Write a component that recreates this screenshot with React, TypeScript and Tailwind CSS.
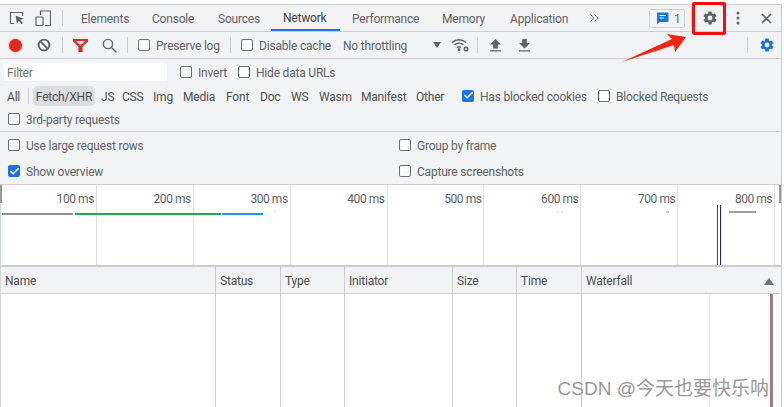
import { Check } from "lucide-react";

const UI_FONT = "font-['Roboto','Liberation_Sans',sans-serif] tracking-[-0.2px]";

const tabs = [
  { label: "Elements", width: "w-[71px]" },
  { label: "Console", width: "w-[66px]" },
  { label: "Sources", width: "w-[65px]" },
  { label: "Network", width: "w-[69px]", active: true },
  { label: "Performance", width: "w-[90px]" },
  { label: "Memory", width: "w-[68px]" },
  { label: "Application", width: "w-[81px]" },
];

const filterTypes = [
  { label: "JS", width: "w-[21px]" },
  { label: "CSS", width: "w-[31px]" },
  { label: "Img", width: "w-[30px]" },
  { label: "Media", width: "w-[43px]" },
  { label: "Font", width: "w-[34px]" },
  { label: "Doc", width: "w-[31px]" },
  { label: "WS", width: "w-[28px]" },
  { label: "Wasm", width: "w-[42px]" },
  { label: "Manifest", width: "w-[55px]" },
  { label: "Other", width: "w-[46px]" },
];

const ticks = ["100 ms", "200 ms", "300 ms", "400 ms", "500 ms", "600 ms", "700 ms", "800 ms"];

const columns = [
  { label: "Name", width: "w-[215px]" },
  { label: "Status", width: "w-[65px]" },
  { label: "Type", width: "w-[64px]" },
  { label: "Initiator", width: "w-[108px]" },
  { label: "Size", width: "w-[64px]" },
  { label: "Time", width: "w-[65px]" },
];

function Box({ checked }: { checked?: boolean }) {
  if (checked) {
    return (
      <span className="flex h-[12px] w-[12px] shrink-0 items-center justify-center rounded-[2px] bg-[#1a73e8]">
        <Check size={11} strokeWidth={3.5} color="#fff" />
      </span>
    );
  }
  return <span className="h-[12px] w-[12px] shrink-0 rounded-[2px] border border-[#6b6e72] bg-white" />;
}

function Option({ label, checked, className }: { label: string; checked?: boolean; className?: string }) {
  return (
    <div className={`flex items-center gap-[6px] whitespace-nowrap ${className ?? ""}`}>
      <Box checked={checked} />
      <span className="pt-[2px]">{label}</span>
    </div>
  );
}

function Sep({ className }: { className?: string }) {
  return <span className={`h-[16px] w-px shrink-0 bg-[#cacdd1] ${className ?? ""}`} />;
}

function Gear({ color, size = 16 }: { color: string; size?: number }) {
  return (
    <svg width={size} height={size} viewBox="0 0 24 24" fill={color}>
      <path
        fillRule="evenodd"
        d="M19.4 13a7.6 7.6 0 0 0 0-2l2.4-1.8-2.4-4.1-2.8 1.1a7.5 7.5 0 0 0-1.7-1L14.4 2.2H9.6l-.5 3a7.5 7.5 0 0 0-1.7 1L4.6 5.1 2.2 9.2 4.6 11a7.6 7.6 0 0 0 0 2l-2.4 1.8 2.4 4.1 2.8-1.1c.5.4 1.1.7 1.7 1l.5 3h4.8l.5-3c.6-.3 1.2-.6 1.7-1l2.8 1.1 2.4-4.1zM12 15.6a3.6 3.6 0 1 1 0-7.2 3.6 3.6 0 0 1 0 7.2z"
      />
    </svg>
  );
}

function TopBar() {
  return (
    <div className="flex h-[27px] shrink-0 items-center border-b border-[#cacdd1]">
      <svg className="ml-[9px] shrink-0" width="16" height="16" viewBox="0 0 16 16" fill="none">
        <path d="M5 13.5H1.5v-11h12V6" stroke="#5f6368" strokeWidth="1.2" />
        <path d="M6.5 5.5l8 3.2-3.2 1.2 2.6 3.2-1.5 1.2-2.5-3.2-2 2.4z" fill="#5f6368" />
      </svg>
      <svg className="ml-[10px] shrink-0" width="16" height="17" viewBox="0 0 16 17" fill="none" stroke="#5f6368" strokeWidth="1.2">
        <path d="M5.5 5V1h10v14.5H10" />
        <rect x="1" y="7" width="7" height="8.5" rx="0.5" />
      </svg>
      <Sep className="ml-[11px]" />
      <div className="ml-[6px] flex h-full text-[12px] text-[#5f6368]">
        {tabs.map((tab) => (
          <div
            key={tab.label}
            className={`flex items-center whitespace-nowrap pl-[12px] pt-[2px] ${tab.width} ${
              tab.active ? "border-b-2 border-[#1a73e8] text-[#3c4043]" : ""
            }`}
          >
            {tab.label}
          </div>
        ))}
        <div className="flex items-center pl-[11px]">
          <svg width="9" height="8" viewBox="0 0 9 8" fill="none" stroke="#6e7175" strokeWidth="1">
            <path d="M0.5 0.5L4 4L0.5 7.5M4.5 0.5L8 4L4.5 7.5" />
          </svg>
        </div>
      </div>
      <div className="ml-auto flex h-[19px] w-[36px] items-center gap-[5px] rounded-[2px] border border-[#d0d2d5] pl-[6px] text-[12px] text-[#5f6368]">
        <svg width="13" height="13" viewBox="0 0 13 13">
          <path d="M1 1.5A1 1 0 0 1 2 .5h9.5a1 1 0 0 1 1 1V9a1 1 0 0 1-1 1H3.5L1 12.5z" fill="#1a73e8" />
          <path d="M3.5 3.5h6.5M3.5 6h4.5" stroke="#fff" strokeWidth="1.2" />
        </svg>
        <span className="pt-[2px]">1</span>
      </div>
      <Sep className="ml-[6px]" />
      <div className="ml-[10px] flex w-[16px] justify-center">
        <Gear color="#5f6368" />
      </div>
      <svg className="ml-[18px]" width="4" height="14" viewBox="0 0 4 14" fill="#5f6368">
        <circle cx="2" cy="2" r="1.5" />
        <circle cx="2" cy="7" r="1.5" />
        <circle cx="2" cy="12" r="1.5" />
      </svg>
      <svg className="ml-[21px] mr-[9px]" width="11" height="11" viewBox="0 0 11 11" stroke="#5f6368" strokeWidth="1.6">
        <path d="M1 1l9 9M10 1l-9 9" />
      </svg>
    </div>
  );
}

function NetworkBar() {
  return (
    <div className="flex h-[27px] shrink-0 items-center border-b border-[#cacdd1] text-[12px] text-[#5f6368]">
      <span className="ml-[9px] h-[13px] w-[13px] shrink-0 rounded-full bg-[#dc2a20] shadow-[0_0_2px_#e8837c]" />
      <svg className="ml-[15px] shrink-0" width="14" height="14" viewBox="0 0 14 14" fill="none" stroke="#5f6368" strokeWidth="1.9">
        <circle cx="7" cy="7" r="5.4" />
        <path d="M3.2 3.2l7.6 7.6" />
      </svg>
      <Sep className="ml-[11px]" />
      <svg className="ml-[10px] shrink-0" width="15" height="13" viewBox="0 0 15 13">
        <path fillRule="evenodd" d="M0 0h15v2.4L9.6 7.5V13H5.4V7.5L0 2.4zM3 2l3.6 3.6h1.8L12 2z" fill="#d93025" />
      </svg>
      <svg className="ml-[14px] shrink-0" width="15" height="15" viewBox="0 0 15 15" fill="none" stroke="#5f6368" strokeWidth="1.4">
        <circle cx="6" cy="6" r="4.6" />
        <path d="M9.5 9.5l5 5" />
      </svg>
      <Sep className="ml-[10px]" />
      <Option label="Preserve log" className="ml-[10px] w-[92px]" />
      <Sep />
      <Option label="Disable cache" className="ml-[10px] w-[102px]" />
      <span className="w-[90px] whitespace-nowrap pt-[2px]">No throttling</span>
      <svg className="shrink-0" width="8" height="6" viewBox="0 0 8 6" fill="#5f6368">
        <path d="M0 0h8L4 6z" />
      </svg>
      <svg className="ml-[10px] shrink-0" width="18" height="14" viewBox="0 0 18 14" fill="none" stroke="#5f6368" strokeWidth="1.4">
        <path d="M1 4.5C5 .8 11 .8 15 4.5M3.5 7c2.6-2.3 6.4-2.3 9 0M6 9.5c1.3-1 2.7-1 4 0" />
        <circle cx="8" cy="11.6" r="0.8" fill="#5f6368" />
        <circle cx="15" cy="11" r="1.7" strokeWidth="1.6" />
      </svg>
      <Sep className="ml-[8px]" />
      <svg className="ml-[12px] shrink-0" width="11" height="13" viewBox="0 0 11 13" fill="#5f6368">
        <path d="M5.5 0L11 5.5H7.8V9.5H3.2V5.5H0zM0 11.3h11V12.6H0z" />
      </svg>
      <svg className="ml-[18px] shrink-0" width="11" height="13" viewBox="0 0 11 13" fill="#5f6368">
        <path d="M3.2 0h4.6v4H11L5.5 9.5 0 4h3.2zM0 11.3h11V12.6H0z" />
      </svg>
      <Sep className="ml-auto" />
      <div className="ml-[11px] mr-[6px]">
        <Gear color="#1a73e8" />
      </div>
    </div>
  );
}

function FilterPanel() {
  return (
    <div className="flex h-[73px] shrink-0 flex-col border-b border-[#cacdd1] text-[12px] text-[#5f6368]">
      <div className="flex h-[24px] shrink-0 items-center pt-[2px]">
        <div className="ml-[4px] flex h-[18px] w-[163px] items-center bg-white pl-[3px] pt-[2px] text-[#6e7175]">Filter</div>
        <Option label="Invert" className="ml-[13px] w-[58px]" />
        <Option label="Hide data URLs" />
      </div>
      <div className="flex h-[24px] shrink-0 items-center pt-[1px] text-[#4b4e52]">
        <span className="ml-[7px] w-[21px] pt-[2px]">All</span>
        <Sep />
        <span className="ml-[4px] mr-[6px] flex h-[20px] w-[62px] items-center justify-center rounded-[5px] bg-[#dadce0] pt-[2px]">Fetch/XHR</span>
        {filterTypes.map((type) => (
          <span key={type.label} className={`whitespace-nowrap pt-[2px] ${type.width}`}>
            {type.label}
          </span>
        ))}
        <Option label="Has blocked cookies" checked className="w-[136px] text-[#5f6368]" />
        <Option label="Blocked Requests" className="text-[#5f6368]" />
      </div>
      <div className="flex flex-1 items-center pl-[8px]">
        <Option label="3rd-party requests" />
      </div>
    </div>
  );
}

function SettingsPanel() {
  return (
    <div className="grid h-[53px] shrink-0 grid-cols-[399px_1fr] grid-rows-2 items-center border-b border-[#cacdd1] text-[12px] text-[#5f6368]">
      <Option label="Use large request rows" className="pl-[8px]" />
      <Option label="Group by frame" />
      <Option label="Show overview" checked className="pl-[8px]" />
      <Option label="Capture screenshots" />
    </div>
  );
}

function Overview() {
  return (
    <div className="relative flex h-[82px] shrink-0 border-b-[2px] border-[#cacdd1] bg-white text-[12px] tracking-[-0.45px] text-[#5f6368]">
      {ticks.map((tick) => (
        <div key={tick} className="h-full w-[96.9px] shrink-0 border-r border-[#e0e0e0] pr-[2px] pt-[5px] text-right">
          {tick}
        </div>
      ))}
      {/* timeline marks sit on top of the grid */}
      <svg className="absolute left-0 top-0" width="781" height="80" viewBox="0 0 781 80">
        <rect x="0" y="0" width="1" height="80" fill="#c8d4e8" />
        <rect x="0" y="0" width="2" height="18" fill="#9a9a9a" />
        <rect x="779" y="0" width="2" height="18" fill="#9a9a9a" />
        <rect x="2" y="28" width="71" height="2" fill="#8f8f8f" />
        <rect x="75" y="28" width="146" height="2" fill="#12b050" />
        <rect x="222" y="28" width="41" height="2" fill="#1a9be8" />
        <rect x="729" y="26" width="27" height="2" fill="#a0a0a0" />
        <rect x="236" y="25" width="2" height="2" fill="#eeeeee" />
        <rect x="274" y="25" width="2" height="2" fill="#e6e6e6" />
        <rect x="557" y="26" width="2" height="2" fill="#e6e6e6" />
        <rect x="561" y="26" width="2" height="2" fill="#e6e6e6" />
        <rect x="666" y="26" width="3" height="2" fill="#cfcfcf" />
        <rect x="717" y="20" width="1" height="60" fill="#c01818" />
        <rect x="720" y="20" width="1" height="60" fill="#1a1ac0" />
      </svg>
    </div>
  );
}

function RequestTable() {
  return (
    <div className="relative flex min-h-0 flex-1 flex-col border-l border-[#d4d6d9] bg-white text-[12px] text-[#4b4e52]">
      <div className="flex h-[27px] shrink-0 border-b border-[#cacdd1] bg-[#f1f3f4]">
        {columns.map((col) => (
          <div key={col.label} className={`flex items-center border-r border-[#cacdd1] pl-[4px] pt-[2px] ${col.width}`}>
            {col.label}
          </div>
        ))}
        <div className="flex flex-1 items-center justify-between pl-[4px] pr-[7px] pt-[2px]">
          Waterfall
          <svg width="10" height="7" viewBox="0 0 10 7" fill="#6e7175">
            <path d="M5 0l5 7H0z" />
          </svg>
        </div>
      </div>
      <div className="flex flex-1">
        {columns.map((col) => (
          <div key={col.label} className={`border-r border-[#cacdd1] ${col.width}`} />
        ))}
        <div className="ml-px w-[127px] border-r border-[#e6e6e6]" />
        <div className="ml-[60px] w-px bg-[#d0605a]" />
        <div className="w-[2px] bg-[#5b8fe0]" />
      </div>
      <span className="absolute bottom-[4px] right-[12px] whitespace-nowrap font-['Liberation_Sans','Noto_Sans_CJK_SC',sans-serif] text-[19px] tracking-normal text-[#999999] [text-shadow:0_0_1px_#fff]">
        CSDN @今天也要快乐呐
      </span>
    </div>
  );
}

export default function App() {
  return (
    <div className={`relative h-[407px] w-[784px] overflow-hidden bg-white pt-[4px] ${UI_FONT}`}>
      <div className="flex h-full w-[782px] flex-col border-r border-t border-[#cacdd1] bg-[#f1f3f4]">
        <TopBar />
        <NetworkBar />
        <FilterPanel />
        <SettingsPanel />
        <Overview />
        <RequestTable />
      </div>
      {/* annotation drawn over the screenshot */}
      <div className="absolute left-[692px] top-[2px] h-[33px] w-[34px] rounded-[2px] border-[3px] border-[#f40f0f]" />
      <svg className="absolute left-[620px] top-[30px]" width="70" height="34" viewBox="0 0 70 34">
        <path d="M2 32L52 9l-5-5 19 3-11 15-1-7z" fill="#f8230f" />
      </svg>
    </div>
  );
}
